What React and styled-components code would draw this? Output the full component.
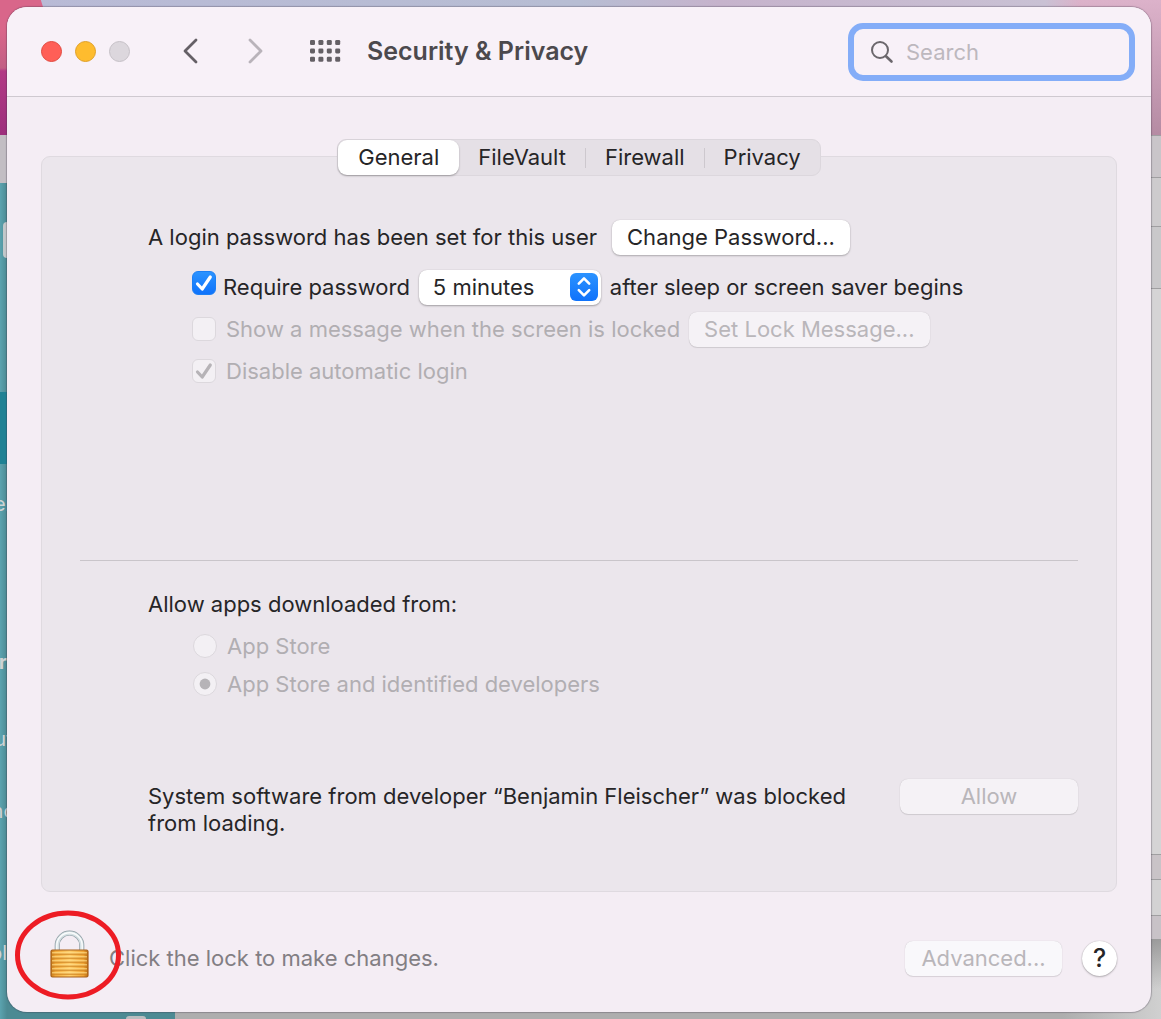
import React, { useState } from "react";
import styled, { createGlobalStyle, css } from "styled-components";

const GlobalStyle = createGlobalStyle`
  *, *::before, *::after { box-sizing: border-box; }
  body {
    margin: 0;
    font-family: Inter, "Liberation Sans", sans-serif;
    font-size: 22px;
    line-height: 27px;
    color: #262527;
  }
  button, input, select { font: inherit; color: inherit; margin: 0; }
`;

/* ---------- Desktop behind the window ---------- */

const Desktop = styled.div`
  position: relative;
  display: flex;
  min-height: 100vh;
  padding: 7px 10px 7px 7px;
  overflow: hidden;
`;

const Backdrop = styled.div`
  position: absolute;
  inset: 0;
  display: flex;
  flex-direction: column;
`;

const Wallpaper = styled.div`
  flex: none;
  height: 135px;
  background:
    linear-gradient(to right, #b9bad6, #b7bdd3 50%, #c6b3cc 62%, #c9c1d4 90%, transparent 93%),
    linear-gradient(#dcb2ca, #b58ba3);
`;

const WallpaperCorner = styled.div`
  width: 43px;
  height: 135px;
  background: linear-gradient(#d9668a 0 30px, #c25f84 68px, #b23a85 71px, #9d2f7c);
  clip-path: polygon(0 0, 95% 0, 100% 7px, 100% 100%, 0 100%);
`;

const BackWindows = styled.div`
  flex: 1;
  display: flex;
`;

const Sidebar = styled.div`
  flex: none;
  width: 175px;
  display: flex;
  flex-direction: column;
  border-top: 48px solid #c2bec3;
  background: linear-gradient(to right, #5ba3af, #4c8a93 7px, #4c8a93);
  color: #cfd3d4;
`;

const SidebarItem = styled.div`
  flex: none;
  width: 7px;
  height: ${(p) => p.$height}px;
  display: flex;
  align-items: center;
  justify-content: ${(p) => (p.$end ? "flex-end" : "center")};
  overflow: hidden;
  font-size: 20px;
  font-weight: ${(p) => (p.$bold ? 700 : 400)};
  background: ${(p) => (p.$active ? "#1f8294" : "transparent")};
`;

const SearchEdge = styled.div`
  width: 4px;
  height: 36px;
  border-radius: 4px 0 0 4px;
  background: #c3c8ca;
`;

const AvatarEdge = styled.div`
  width: 20px;
  height: 3px;
  margin: auto 0 0 126px;
  border-radius: 10px 10px 0 0;
  background: #b9bdbf;
`;

const Pane = styled.div`
  flex: 1;
  display: flex;
  flex-direction: column;
`;

const PaneBand = styled.div`
  flex: none;
  height: ${(p) => p.$height}px;
  background: ${(p) => p.$color};
  border-top: 1px solid #a09fa1;
`;

const PaneShade = styled.div`
  flex: 1;
  background:
    linear-gradient(rgba(0, 0, 0, 0.25), transparent 50px),
    linear-gradient(to right, #aeaeae 90%, #d0d0d0);
`;

/* ---------- Window ---------- */

const Window = styled.main`
  position: relative;
  flex: 1;
  display: flex;
  flex-direction: column;
  border-radius: 20px;
  background: #f4edf4;
  box-shadow: 0 0 1px 1px rgba(60, 50, 70, 0.3);
`;

const Toolbar = styled.header`
  display: flex;
  align-items: center;
  height: 90px;
  padding: 0 16px 0 34px;
  border-bottom: 1px solid #cfc9d0;
  border-radius: 20px 20px 0 0;
  background: #f8f1f8;
`;

const TrafficLights = styled.div`
  display: flex;
  gap: 13px;
  margin-right: 53px;
`;

const TrafficLight = styled.button`
  width: 21px;
  height: 21px;
  padding: 0;
  border: 1px solid ${(p) => p.$edge};
  border-radius: 50%;
  background: ${(p) => p.$fill};
`;

const IconButton = styled.button`
  display: flex;
  padding: 0 0 2px;
  border: 0;
  background: none;
  color: ${(p) => (p.disabled ? "#b9b3ba" : "#656066")};
`;

const NavButtons = styled.div`
  display: flex;
  gap: 50px;
  margin-right: 46px;
`;

const Title = styled.h1`
  flex: 1;
  margin: 0 0 0 26px;
  padding-bottom: 2px;
  font-size: 25px;
  line-height: 32px;
  font-weight: 600;
  color: #4c494d;
`;

const SearchBox = styled.label`
  display: flex;
  align-items: center;
  gap: 12px;
  width: 287px;
  height: 58px;
  padding: 0 16px;
  border: 6px solid #84adf8;
  border-radius: 15px;
  color: #6b676c;
`;

const SearchInput = styled.input`
  flex: 1;
  min-width: 0;
  padding: 2px 0 0;
  border: 0;
  outline: 0;
  background: transparent;
  &::placeholder { color: #bdb8be; opacity: 1; }
`;

/* ---------- Tabs and panel ---------- */

const Content = styled.div`
  flex: 1;
  display: flex;
  flex-direction: column;
  padding: 42px 34px 0;
`;

const Tabs = styled.div`
  z-index: 1;
  align-self: center;
  display: flex;
  align-items: center;
  height: 37px;
  margin-bottom: -20px;
  border: 1px solid #dcd7dd;
  border-radius: 9px;
  background: #e5e0e6;
`;

const Tab = styled.button`
  height: 35px;
  padding: 0 19px 1px;
  border: 0;
  border-radius: 9px;
  background: transparent;
  ${(p) =>
    p.$selected &&
    css`
      padding: 0 20px 1px;
      background: #fff;
      box-shadow: 0 1px 2px rgba(0, 0, 0, 0.3);
    `}
`;

const TabDivider = styled.span`
  width: 1px;
  height: 20px;
  background: #cdc8ce;
`;

const Panel = styled.section`
  flex: 1;
  display: flex;
  flex-direction: column;
  padding: 60px 38px 54px;
  border: 1px solid #dfdae0;
  border-radius: 9px;
  background: #ebe6ec;
`;

const Settings = styled.div`
  flex: 1;
  display: flex;
  flex-direction: column;
  gap: 2px;
  padding-left: 68px;
`;

const Row = styled.div`
  display: flex;
  align-items: center;
  gap: ${(p) => p.$gap || 0}px;
  min-height: 40px;
  margin-left: ${(p) => (p.$indent ? 44 : 0)}px;
  margin-bottom: ${(p) => (p.$spaced ? 8 : 0)}px;
`;

const PushButton = styled.button`
  height: 35px;
  min-width: ${(p) => p.$minWidth || 0}px;
  padding: 0 15px;
  border: 0;
  border-radius: 8px;
  background: #fff;
  white-space: nowrap;
  box-shadow: 0 0 1px rgba(0, 0, 0, 0.2), 0 1px 2px rgba(0, 0, 0, 0.25);
  &:disabled {
    background: #f5f2f6;
    color: #b9b6ba;
    box-shadow: 0 0 1px rgba(0, 0, 0, 0.2), 0 1px 1px rgba(0, 0, 0, 0.1);
  }
`;

const Option = styled.label`
  display: flex;
  align-items: ${(p) => (p.$raised ? "flex-start" : "center")};
  gap: ${(p) => (p.$raised ? 7 : 10)}px;
  line-height: 32px;
  color: ${(p) => (p.$dim ? "#b1aeb2" : "inherit")};
`;

const Stack = styled.span`
  flex: none;
  display: grid;
  align-items: center;
  > * { grid-area: 1 / 1; }
  > svg { justify-self: ${(p) => (p.$end ? "end" : "center")}; pointer-events: none; }
`;

const Tick = styled.input`
  appearance: none;
  width: 24px;
  height: 24px;
  border-radius: ${(p) => (p.type === "radio" ? "50%" : "6px")};
  background: #fff;
  border: 1px solid #dbd7dc;
  &:checked { background: linear-gradient(#2b93ff, #0f72fb); border-color: #1c80f5; }
  &:disabled { background: #f3f0f4; border-color: #dcd8dd; }
`;

const PopUp = styled.select`
  appearance: none;
  width: 182px;
  height: 35px;
  padding: 0 40px 0 14px;
  border: 0;
  border-radius: 8px;
  background: #fff;
  box-shadow: 0 0 1px rgba(0, 0, 0, 0.2), 0 1px 2px rgba(0, 0, 0, 0.3);
`;

const PopUpIcon = styled.svg`
  margin-right: 3px;
  border-radius: 6px;
  background: linear-gradient(#2b93ff, #0f72fb);
`;

const Divider = styled.hr`
  width: 100%;
  height: 1px;
  margin: 0 0 24px;
  border: 0;
  background: #c9c5ca;
`;

const Sources = styled.fieldset`
  min-width: 0;
  margin: 0 0 76px;
  padding: 0 0 0 68px;
  border: 0;
`;

const Legend = styled.legend`
  padding: 0;
  margin-bottom: 4px;
  line-height: 38px;
`;

const SourceRow = styled.div`
  display: flex;
  align-items: center;
  height: 38px;
  margin-left: 45px;
`;

const Blocked = styled.div`
  display: flex;
  align-items: flex-start;
  justify-content: space-between;
  gap: 40px;
  padding-left: 68px;
`;

const BlockedText = styled.p`
  max-width: 710px;
  margin: 0;
  padding-top: 4px;
`;

/* ---------- Footer ---------- */

const Footer = styled.footer`
  display: flex;
  align-items: center;
  gap: 20px;
  height: 120px;
  padding: 13px 0 0 9px;
`;

const LockButton = styled.button`
  position: relative;
  display: flex;
  padding: 0 0 10px;
  border: 0;
  background: none;
`;

const Highlight = styled.svg`
  position: absolute;
  left: -36px;
  top: -20px;
  pointer-events: none;
  z-index: 2;
`;

const LockText = styled.span`
  flex: 1;
  color: #827e83;
`;

const FooterButton = styled(PushButton)`
  &:disabled { background: #f9f8fb; }
`;

const HelpButton = styled.button`
  width: 35px;
  height: 35px;
  padding: 0;
  border: 0;
  border-radius: 50%;
  background: #fff;
  font-size: 25px;
  font-weight: 500;
  box-shadow: 0 0 1px rgba(0, 0, 0, 0.3), 0 1px 2px rgba(0, 0, 0, 0.25);
`;

/* ---------- Drawings ---------- */

const Chevron = ({ forward }) => (
  <svg width="15" height="26" viewBox="0 0 15 26" fill="none" stroke="currentColor" strokeWidth="2.8" strokeLinecap="round" strokeLinejoin="round">
    <path d={forward ? "M2 2 13 13 2 24" : "M13 2 2 13 13 24"} />
  </svg>
);

const GridIcon = () => (
  <svg width="32" height="24" viewBox="0 0 32 24" fill="currentColor">
    {[0, 1, 2].map((r) =>
      [0, 1, 2, 3].map((c) => (
        <rect key={`${r}${c}`} x={1 + c * 8.4} y={1 + r * 8.4} width="5" height="5" rx="1.3" />
      ))
    )}
  </svg>
);

const SearchIcon = () => (
  <svg width="24" height="24" viewBox="0 0 24 24" fill="none" stroke="currentColor" strokeLinecap="round">
    <circle cx="10" cy="10" r="8" strokeWidth="2" />
    <path d="M16 16.3 21.5 21.5" strokeWidth="2.6" />
  </svg>
);

const CheckMark = ({ color }) => (
  <svg width="24" height="24" viewBox="0 0 24 24" fill="none" stroke={color} strokeWidth="3.2" strokeLinecap="round" strokeLinejoin="round">
    <path d="M5.5 13 10.2 18 18.3 6" />
  </svg>
);

const RadioDot = () => (
  <svg width="24" height="24" viewBox="0 0 24 24">
    <circle cx="12" cy="12" r="5.4" fill="#b6b3b7" />
  </svg>
);

const LockIcon = () => (
  <svg width="39" height="48" viewBox="0 0 39 48">
    <defs>
      <linearGradient id="brass" x1="0" y1="0" x2="1" y2="0">
        <stop offset="0" stopColor="#c67a18" />
        <stop offset="0.12" stopColor="#f2a93a" />
        <stop offset="0.5" stopColor="#ffcf6c" />
        <stop offset="0.88" stopColor="#f0a333" />
        <stop offset="1" stopColor="#b96c12" />
      </linearGradient>
    </defs>
    <path d="M7.2 21V15.4a12.3 12.3 0 0 1 24.6 0v5.6" fill="none" stroke="#8c9ba1" strokeWidth="5" />
    <path d="M7.2 21V15.4a12.3 12.3 0 0 1 24.6 0v5.6" fill="none" stroke="#d5e0e4" strokeWidth="3.6" />
    <path d="M6.8 21V15.4a12.7 12.7 0 0 1 25.4 0v5.6" fill="none" stroke="#fafcfc" strokeWidth="1.4" />
    <rect x="1" y="20" width="37" height="27" rx="1.5" fill="url(#brass)" stroke="#a8611a" strokeWidth="1.2" />
    {[23.5, 27.5, 31.5, 35.5, 39.5, 43.5].map((y) => (
      <React.Fragment key={y}>
        <rect x="2" y={y} width="35" height="1.3" fill="#cf8424" opacity="0.85" />
        <rect x="2" y={y - 1.4} width="35" height="1.3" fill="#ffdf8d" opacity="0.7" />
      </React.Fragment>
    ))}
  </svg>
);

/* ---------- Page ---------- */

const TAB_NAMES = ["General", "FileVault", "Firewall", "Privacy"];

export default function App() {
  const [tab, setTab] = useState("General");
  const [required, setRequired] = useState(true);

  return (
    <Desktop>
      <GlobalStyle />
      <Backdrop aria-hidden="true">
        <Wallpaper><WallpaperCorner /></Wallpaper>
        <BackWindows>
          <Sidebar>
            <SidebarItem $height={38} />
            <SidebarItem $height={38} $end><SearchEdge /></SidebarItem>
            <SidebarItem $height={133} />
            <SidebarItem $height={72} $active />
            <SidebarItem $height={80}>er</SidebarItem>
            <SidebarItem $height={80} />
            <SidebarItem $height={76} $bold $end>r</SidebarItem>
            <SidebarItem $height={78}>ut</SidebarItem>
            <SidebarItem $height={66}>no</SidebarItem>
            <SidebarItem $height={76} />
            <SidebarItem $height={66} $end>pl</SidebarItem>
            <AvatarEdge />
          </Sidebar>
          <Pane>
            <PaneBand $height={42} $color="#c9c5c9" />
            <PaneBand $height={49} $color="#cdcbcd" />
            <PaneBand $height={62} $color="#c9c8ca" />
            <PaneBand $height={566} $color="#d5d4d5" />
            <PaneBand $height={25} $color="#c9c3c7" />
            <PaneBand $height={36} $color="#d3d2d3" />
            <PaneBand $height={24} $color="#c8c2c7" />
            <PaneShade />
          </Pane>
        </BackWindows>
      </Backdrop>

      <Window>
        <Toolbar>
          <TrafficLights>
            <TrafficLight aria-label="Close" $fill="#ff5f57" $edge="#e2493f" />
            <TrafficLight aria-label="Minimize" $fill="#febc2e" $edge="#e0a028" />
            <TrafficLight aria-label="Zoom" disabled $fill="#dcd7dd" $edge="#c6c1c7" />
          </TrafficLights>
          <NavButtons>
            <IconButton aria-label="Back"><Chevron /></IconButton>
            <IconButton aria-label="Forward" disabled><Chevron forward /></IconButton>
          </NavButtons>
          <IconButton aria-label="Show all"><GridIcon /></IconButton>
          <Title>Security &amp; Privacy</Title>
          <SearchBox>
            <SearchIcon />
            <SearchInput type="text" placeholder="Search" aria-label="Search" />
          </SearchBox>
        </Toolbar>

        <Content>
          <Tabs role="tablist">
            {TAB_NAMES.map((name, i) => (
              <React.Fragment key={name}>
                {i > 1 && <TabDivider />}
                <Tab role="tab" aria-selected={tab === name} $selected={tab === name} onClick={() => setTab(name)}>
                  {name}
                </Tab>
              </React.Fragment>
            ))}
          </Tabs>

          <Panel>
            <Settings>
              <Row $gap={15} $spaced>
                <span>A login password has been set for this user</span>
                <PushButton>Change Password...</PushButton>
              </Row>
              <Row $gap={9} $indent>
                <Option $raised>
                  <Stack>
                    <Tick type="checkbox" checked={required} onChange={() => setRequired(!required)} />
                    {required && <CheckMark color="#fff" />}
                  </Stack>
                  Require password
                </Option>
                <Stack $end>
                  <PopUp aria-label="Password delay" defaultValue="5 minutes">
                    <option>5 minutes</option>
                  </PopUp>
                  <PopUpIcon width="28" height="28" viewBox="0 0 28 28" fill="none" stroke="#fff" strokeWidth="2.6" strokeLinecap="round" strokeLinejoin="round">
                    <path d="M8.8 10.6 14 5.4 19.2 10.6M8.8 17.2 14 22.4 19.2 17.2" />
                  </PopUpIcon>
                </Stack>
                <span>after sleep or screen saver begins</span>
              </Row>
              <Row $gap={9} $indent>
                <Option $dim>
                  <Stack><Tick type="checkbox" disabled /></Stack>
                  Show a message when the screen is locked
                </Option>
                <PushButton disabled>Set Lock Message...</PushButton>
              </Row>
              <Row $indent>
                <Option $dim>
                  <Stack>
                    <Tick type="checkbox" disabled defaultChecked />
                    <CheckMark color="#b6b3b7" />
                  </Stack>
                  Disable automatic login
                </Option>
              </Row>
            </Settings>

            <Divider />

            <Sources>
              <Legend>Allow apps downloaded from:</Legend>
              <SourceRow>
                <Option $dim>
                  <Stack><Tick type="radio" name="source" disabled /></Stack>
                  App Store
                </Option>
              </SourceRow>
              <SourceRow>
                <Option $dim>
                  <Stack>
                    <Tick type="radio" name="source" disabled defaultChecked />
                    <RadioDot />
                  </Stack>
                  App Store and identified developers
                </Option>
              </SourceRow>
            </Sources>

            <Blocked>
              <BlockedText>
                System software from developer “Benjamin Fleischer” was blocked from loading.
              </BlockedText>
              <PushButton disabled $minWidth={178}>Allow</PushButton>
            </Blocked>
          </Panel>

          <Footer>
            <LockButton aria-label="Unlock settings">
              <LockIcon />
              <Highlight width="108" height="90" viewBox="0 0 108 90" fill="none" stroke="#ed1c24" strokeWidth="5">
                <ellipse cx="54" cy="45" rx="50.5" ry="42" />
              </Highlight>
            </LockButton>
            <LockText>Click the lock to make changes.</LockText>
            <FooterButton disabled $minWidth={157}>Advanced...</FooterButton>
            <HelpButton aria-label="Help">?</HelpButton>
          </Footer>
        </Content>
      </Window>
    </Desktop>
  );
}
